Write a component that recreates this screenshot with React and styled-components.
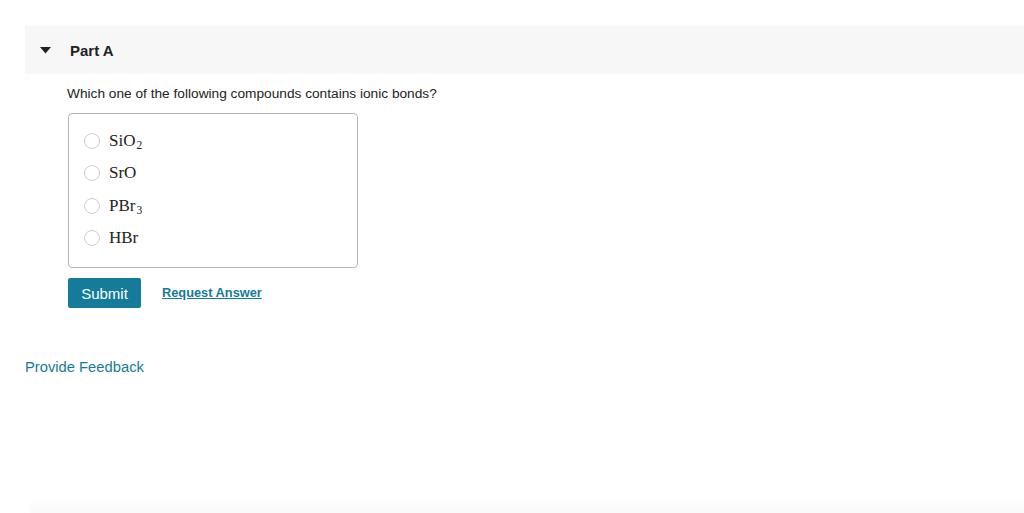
import React from "react";
import styled, { createGlobalStyle } from "styled-components";

const Global = createGlobalStyle`
  html, body { margin: 0; padding: 0; background: #fff; }
  body { font-family: "Liberation Sans", Arial, Helvetica, sans-serif; color: #222; }
`;

const Page = styled.div`
  padding: 26px 0 0 25px;
  width: 1024px;
  height: 513px;
  box-sizing: border-box;
  overflow: hidden;
  position: relative;
`;

const PartHeader = styled.div`
  display: flex;
  align-items: center;
  height: 48px;
  background: #f7f7f7;
  padding-left: 15px;
`;

const Caret = styled.svg`
  width: 11px;
  height: 8px;
  margin-right: 19px;
`;

const PartTitle = styled.h2`
  margin: 0;
  font-size: 15px;
  font-weight: bold;
  color: #222;
`;

const Body = styled.div`
  padding: 12px 0 0 42px;
`;

const Question = styled.p`
  margin: 0;
  font-size: 13.7px;
  line-height: 16px;
  color: #222;
`;

const ChoiceBox = styled.div`
  margin-top: 11px;
  margin-left: 1px;
  width: 290px;
  height: 155px;
  box-sizing: border-box;
  border: 1px solid #b5b5b5;
  border-radius: 4px;
  padding: 16px 0 0 15px;
  display: flex;
  flex-direction: column;
  gap: 11px;
`;

const Choice = styled.label`
  display: flex;
  align-items: center;
  height: 21.5px;
  cursor: pointer;
`;

const Radio = styled.span`
  width: 14px;
  height: 14px;
  border-radius: 50%;
  border: 1px solid #cdcdcd;
  background: #fff;
  margin-right: 9px;
  flex: none;
`;

const Formula = styled.span`
  font-family: "Liberation Serif", "Times New Roman", serif;
  font-size: 17px;
  color: #222;
  sub {
    font-size: 11.5px;
    vertical-align: -3px;
    line-height: 0;
    margin-left: 1px;
  }
`;

const Actions = styled.div`
  display: flex;
  align-items: center;
  gap: 21px;
  margin-top: 10px;
  margin-left: 1px;
`;

const SubmitButton = styled.button`
  width: 73px;
  height: 30px;
  border: none;
  border-radius: 2px;
  background: #147b9a;
  color: #fff;
  font-family: "Liberation Sans", Arial, sans-serif;
  font-size: 15px;
  padding: 0;
`;

const TextLink = styled.a`
  font-size: 12.8px;
  font-weight: bold;
  color: #147b9a;
  text-decoration: underline;
  margin-top: -2px;
`;

const Feedback = styled.a`
  display: inline-block;
  margin-top: 51px;
  font-size: 14.75px;
  color: #147b9a;
  text-decoration: none;
`;

const BottomFade = styled.div`
  position: absolute;
  left: 30px;
  right: 0;
  bottom: 0;
  height: 14px;
  background: linear-gradient(#fefefe, #fafafa);
`;

const choices = [
  { base: "SiO", sub: "2" },
  { base: "SrO" },
  { base: "PBr", sub: "3" },
  { base: "HBr" },
];

export default function App() {
  return (
    <>
      <Global />
      <Page>
        <PartHeader>
          <Caret viewBox="0 0 11 8">
            <path d="M0 1 L11 1 L5.5 7.5 Z" fill="#222" />
          </Caret>
          <PartTitle>Part A</PartTitle>
        </PartHeader>
        <Body>
          <Question>Which one of the following compounds contains ionic bonds?</Question>
          <ChoiceBox>
            {choices.map((c) => (
              <Choice key={c.base + (c.sub || "")}>
                <Radio />
                <Formula>
                  {c.base}
                  {c.sub && <sub>{c.sub}</sub>}
                </Formula>
              </Choice>
            ))}
          </ChoiceBox>
          <Actions>
            <SubmitButton>Submit</SubmitButton>
            <TextLink href="#">Request Answer</TextLink>
          </Actions>
        </Body>
        <Feedback href="#">Provide Feedback</Feedback>
        <BottomFade />
      </Page>
    </>
  );
}
